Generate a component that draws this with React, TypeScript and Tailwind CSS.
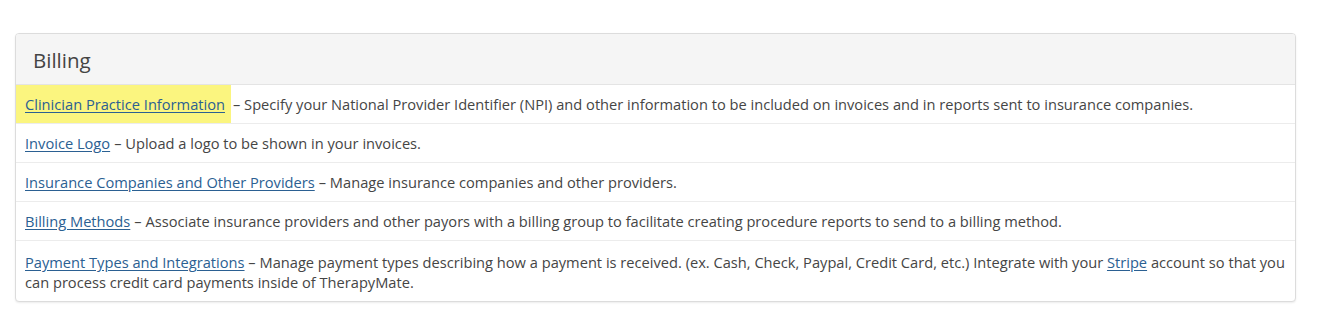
const rows = [
  {
    link: "Clinician Practice Information",
    text: "– Specify your National Provider Identifier (NPI) and other information to be included on invoices and in reports sent to insurance companies.",
    highlight: true,
  },
  { link: "Invoice Logo", text: "– Upload a logo to be shown in your invoices." },
  { link: "Insurance Companies and Other Providers", text: "– Manage insurance companies and other providers." },
  {
    link: "Billing Methods",
    text: "– Associate insurance providers and other payors with a billing group to facilitate creating procedure reports to send to a billing method.",
  },
];

const Link = ({ children }: { children: React.ReactNode }) => (
  <a href="#" className="text-[#2b6092] underline decoration-[#2b6092] underline-offset-2">
    {children}
  </a>
);

export default function App() {
  return (
    <div className="bg-white w-[1338px] h-[322px] pt-[33px] pl-[15px] pr-[42px] font-['Open_Sans',sans-serif] text-[14.65px] leading-[20px] text-[#454545]">
      <div className="border border-[#dcdcdc] rounded-[4px] shadow-[0_1px_2px_rgba(0,0,0,0.08)] bg-white overflow-hidden">
        <div className="bg-[#f5f5f5] h-[51px] pl-[17px] flex items-center border-b border-[#e4e4e4]">
          <h3 className="text-[20.5px] text-[#444] leading-[24px] pt-[2px]">Billing</h3>
        </div>
        {rows.map((r) => (
          <div key={r.link} className="border-b border-[#ececec] h-[39px] flex items-center">
            {r.highlight ? (
              <span className="bg-[#fbf57f] self-stretch flex items-center pl-[9px] pr-[6px] mr-[2px]">
                <Link>{r.link}</Link>
              </span>
            ) : (
              <span className="pl-[9px] pr-[4px]">
                <Link>{r.link}</Link>
              </span>
            )}
            <span className="whitespace-pre">{r.text}</span>
          </div>
        ))}
        <div className="pl-[9px] pr-[10px] pt-[11px] pb-[9px]">
          <Link>Payment Types and Integrations</Link> – Manage payment types describing how a payment is received. (ex. Cash, Check, Paypal, Credit Card, etc.) Integrate with your{" "}
          <Link>Stripe</Link> account so that you can process credit card payments inside of TherapyMate.
        </div>
      </div>
    </div>
  );
}
